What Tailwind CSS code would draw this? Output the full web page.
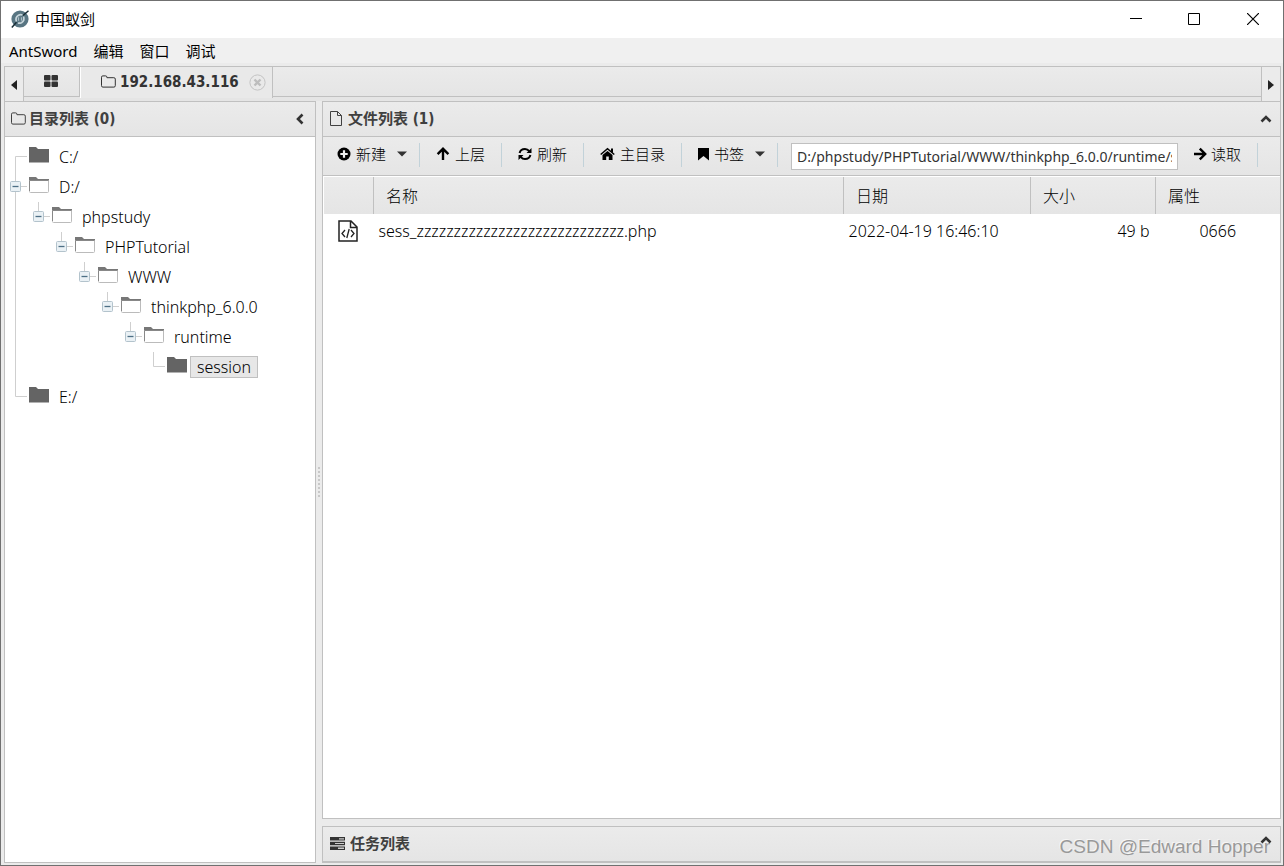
<!DOCTYPE html>
<html lang="zh-CN">
<head>
<meta charset="utf-8">
<title>中国蚁剑</title>
<script src="https://cdn.jsdelivr.net/npm/@tailwindcss/browser@4"></script>
</head>
<body class="flex h-screen flex-col overflow-hidden border border-[#707070] bg-[#ebebeb] font-['Noto_Sans','Noto_Sans_CJK_SC',sans-serif] text-[15px] leading-5 text-black">

<svg class="hidden">
  <symbol id="folder-o" viewBox="0 0 15 13"><path d="M.5 2.2Q.5.9 1.800.9H4.600Q5.900.9 5.900 2.200V2.700H12.800Q14.300 2.700 14.300 4.100V10.700Q14.300 12.100 12.900 12.100H1.900Q.5 12.100.5 10.700Z" fill="none" stroke="currentColor"/></symbol>
  <symbol id="tree-open" viewBox="0 0 20 16"><path d="M0 0H7L9 2H20V4H0Z" fill="#777"/><path d="M.5 3V14.500Q.5 15.500 1.500 15.500H18.500Q19.500 15.500 19.500 14.500V3" fill="#fff" stroke="#bbb"/><path d="M1 4H19V14H1Z" fill="#fff"/><path d="M.5 14V3.500H19.500" fill="none" stroke="#888"/></symbol>
  <symbol id="tree-closed" viewBox="0 0 20 16"><path d="M0 0H7L9 2H20V15.500H0Z" fill="#646464"/></symbol>
  <symbol id="minus" viewBox="0 0 18 30"><path d="M5.500 0V10M11 14.500H17" stroke="#cfcfcf"/><rect x=".5" y="9.500" width="10" height="10" rx="1" fill="#eaf1f5" stroke="#b3c3cc"/><path d="M2.500 14.500H8.500" stroke="#4d6f85" stroke-width="1.300"/></symbol>
  <symbol id="chevron" viewBox="0 0 12 8"><path d="M1.500 6.500L6 2L10.500 6.500" fill="none" stroke="currentColor" stroke-width="2.600"/></symbol>
  <symbol id="caret" viewBox="0 0 10 6"><path d="M0 .5H10L5 5.500Z" fill="#333"/></symbol>
  <symbol id="arrow" viewBox="0 0 14 14"><path d="M1 7H12M6.800 1.600L12.200 7L6.800 12.400" fill="none" stroke="#000" stroke-width="2.400"/></symbol>
</svg>

<header class="flex h-[37px] shrink-0 items-center bg-white pb-0.5 pl-2.5">
  <svg class="mr-1.5 size-[18px] shrink-0" viewBox="0 0 18 18"><circle cx="9" cy="9" r="8.600" fill="#587582"/><path d="M5.500 11.500Q3.800 7.500 7.500 5.200Q9.500 4.200 11.500 5M12.500 6.500Q14 10.500 10.500 12.700Q8.500 13.500 7 13" fill="none" stroke="#c8d6dc" stroke-width="1.700"/><circle cx="9" cy="9" r="2.300" fill="#a9bdc6"/><path d="M9 7V11" stroke="#37515d" stroke-width="1.200"/><path d="M.8 17.500L5.500 12.300M12 5.500L17.500.8" stroke="#172b34" stroke-width="1.500"/></svg>
  <h1 class="grow">中国蚁剑</h1>
  <button aria-label="最小化" class="flex h-full w-[58px] items-center justify-center"><svg class="size-3" viewBox="0 0 12 12"><path d="M0 5.500H12" stroke="#000"/></svg></button>
  <button aria-label="最大化" class="flex h-full w-[58px] items-center justify-center"><svg class="size-3" viewBox="0 0 12 12"><path d="M.5.5H11.500V11.500H.5Z" fill="none" stroke="#000"/></svg></button>
  <button aria-label="关闭" class="flex h-full w-[60px] items-center justify-center"><svg class="size-3" viewBox="0 0 12 12"><path d="M0 0L12 12M12 0L0 12" stroke="#000" stroke-width="1.200"/></svg></button>
</header>

<nav class="flex h-[25px] shrink-0 items-center gap-4 bg-[#f0f0f0] pl-2">
  <button>AntSword</button><button>编辑</button><button>窗口</button><button>调试</button>
</nav>

<main class="mt-[3px] mr-[2px] mb-[2px] ml-[3px] flex min-h-0 grow flex-col">
  <div class="flex h-[35px] shrink-0 border border-b-0 border-[#c0c0c0] bg-[#e5e5e5]">
    <button aria-label="向左滚动" class="flex w-[19px] shrink-0 items-center justify-center border-r border-[#c0c0c0] bg-[#ebebeb] pt-0.5"><svg class="h-2.5 w-1.5" viewBox="0 0 6 10"><path d="M6 0V10L0 5Z" fill="#222"/></svg></button>
    <div role="tablist" class="flex h-[30px] grow border-b border-[#c0c0c0] bg-linear-to-b from-[#ebebeb] to-[#e5e5e5]">
      <button role="tab" aria-label="主页" class="flex w-[56px] items-center justify-center border-r border-[#c0c0c0] pr-0.5 pb-px"><svg class="h-3 w-3.5" viewBox="0 0 14 12" fill="#333"><rect width="6.500" height="5.400" rx="1"/><rect x="7.500" width="6.500" height="5.400" rx="1"/><rect y="6.500" width="6.500" height="5.400" rx="1"/><rect x="7.500" y="6.500" width="6.500" height="5.400" rx="1"/></svg></button>
      <div class="flex h-[31px] shrink-0 items-center border-r border-l border-r-[#c0c0c0] border-l-white bg-[#e9e9e9] pr-1.5 pl-5 text-[#333]">
        <button role="tab" aria-selected="true" class="flex items-center gap-1 pb-0.5 font-['DejaVu_Sans_Condensed','Noto_Sans',sans-serif] font-bold"><svg class="h-[13px] w-[15px]"><use href="#folder-o"/></svg>192.168.43.116</button>
        <button aria-label="关闭标签" class="ml-2.5"><svg class="size-[17px]" viewBox="0 0 17 17"><circle cx="8.500" cy="8.500" r="7.600" fill="none" stroke="#c3c3c3"/><path d="M5.500 5.500L11.500 11.500M11.500 5.500L5.500 11.500" stroke="#bdbdbd" stroke-width="2.400"/></svg></button>
      </div>
    </div>
    <button aria-label="向右滚动" class="flex w-[19px] shrink-0 items-center justify-center border-l border-[#c0c0c0] bg-[#ebebeb] pt-0.5"><svg class="h-2.5 w-1.5" viewBox="0 0 6 10"><path d="M0 0V10L6 5Z" fill="#222"/></svg></button>
  </div>

  <div class="flex min-h-0 grow">
    <aside class="flex w-[312px] shrink-0 flex-col border border-[#c0c0c0] bg-white">
      <div class="flex h-[35px] shrink-0 items-center gap-[3px] border-b border-[#c0c0c0] bg-linear-to-b from-[#ebebeb] to-[#e5e5e5] pr-[9px] pb-px pl-1.5 text-[#404040]">
        <svg class="h-[13px] w-[15px]"><use href="#folder-o"/></svg>
        <h2 class="grow font-['DejaVu_Sans_Condensed','Noto_Sans_CJK_SC',sans-serif] font-bold">目录列表 (0)</h2>
        <button aria-label="折叠目录列表" class="text-[#333]"><svg class="h-2 w-3 -rotate-90"><use href="#chevron"/></svg></button>
      </div>
      <ul role="tree" aria-label="目录列表" class="pt-[5px] pl-[5px] text-base leading-5 font-light">
        <li role="treeitem" class="flex h-[30px] items-center"><svg class="h-[30px] w-[18px]" viewBox="0 0 18 30"><path d="M5.500 30V14.500H17" fill="none" stroke="#cfcfcf"/></svg><svg class="mb-1 ml-px h-4 w-5"><use href="#tree-closed"/></svg><span class="ml-[3px] border border-transparent px-1.5">C:/</span></li>
        <li role="treeitem" aria-expanded="true">
          <div class="flex h-[30px] items-center"><svg class="h-[30px] w-[18px]" viewBox="0 0 18 30"><path d="M5.500 20V30" stroke="#cfcfcf"/><use href="#minus"/></svg><svg class="mb-1 ml-px h-4 w-5"><use href="#tree-open"/></svg><span class="ml-[3px] border border-transparent px-1.5">D:/</span></div>
          <ul role="group" class="ml-[5px] border-l border-[#cfcfcf] pl-[17px]">
            <li role="treeitem" aria-expanded="true">
              <div class="flex h-[30px] items-center"><svg class="h-[30px] w-[18px]"><use href="#minus"/></svg><svg class="mb-1 ml-px h-4 w-5"><use href="#tree-open"/></svg><span class="ml-[3px] border border-transparent px-1.5">phpstudy</span></div>
              <ul role="group" class="pl-[23px]">
                <li role="treeitem" aria-expanded="true">
                  <div class="flex h-[30px] items-center"><svg class="h-[30px] w-[18px]"><use href="#minus"/></svg><svg class="mb-1 ml-px h-4 w-5"><use href="#tree-open"/></svg><span class="ml-[3px] border border-transparent px-1.5">PHPTutorial</span></div>
                  <ul role="group" class="pl-[23px]">
                    <li role="treeitem" aria-expanded="true">
                      <div class="flex h-[30px] items-center"><svg class="h-[30px] w-[18px]"><use href="#minus"/></svg><svg class="mb-1 ml-px h-4 w-5"><use href="#tree-open"/></svg><span class="ml-[3px] border border-transparent px-1.5">WWW</span></div>
                      <ul role="group" class="pl-[23px]">
                        <li role="treeitem" aria-expanded="true">
                          <div class="flex h-[30px] items-center"><svg class="h-[30px] w-[18px]"><use href="#minus"/></svg><svg class="mb-1 ml-px h-4 w-5"><use href="#tree-open"/></svg><span class="ml-[3px] border border-transparent px-1.5">thinkphp_6.0.0</span></div>
                          <ul role="group" class="pl-[23px]">
                            <li role="treeitem" aria-expanded="true">
                              <div class="flex h-[30px] items-center"><svg class="h-[30px] w-[18px]"><use href="#minus"/></svg><svg class="mb-1 ml-px h-4 w-5"><use href="#tree-open"/></svg><span class="ml-[3px] border border-transparent px-1.5">runtime</span></div>
                              <ul role="group" class="pl-[23px]">
                                <li role="treeitem" aria-selected="true" class="flex h-[30px] items-center"><svg class="h-[30px] w-[18px]" viewBox="0 0 18 30"><path d="M5.500 0V14.500H17" fill="none" stroke="#cfcfcf"/></svg><svg class="mb-1 ml-px h-4 w-5"><use href="#tree-closed"/></svg><span class="ml-[3px] border border-[#c0c0c0] bg-[#e7e7e7] px-1.5">session</span></li>
                              </ul>
                            </li>
                          </ul>
                        </li>
                      </ul>
                    </li>
                  </ul>
                </li>
              </ul>
            </li>
          </ul>
        </li>
        <li role="treeitem" class="flex h-[30px] items-center"><svg class="h-[30px] w-[18px]" viewBox="0 0 18 30"><path d="M5.500 0V14.500H17" fill="none" stroke="#cfcfcf"/></svg><svg class="mb-1 ml-px h-4 w-5"><use href="#tree-closed"/></svg><span class="ml-[3px] border border-transparent px-1.5">E:/</span></li>
      </ul>
    </aside>

    <div role="separator" class="flex w-1.5 shrink-0 items-center justify-center"><div class="h-[30px] border-l-2 border-dotted border-[#c8c8c8]"></div></div>

    <div class="flex min-w-0 grow flex-col gap-[7px]">
      <section class="flex min-h-0 grow flex-col border border-[#c0c0c0] bg-white">
        <div class="flex h-[35px] shrink-0 items-center gap-1.5 border-b border-[#c0c0c0] bg-linear-to-b from-[#ebebeb] to-[#e5e5e5] pr-2 pb-px pl-[7px] text-[#404040]">
          <svg class="h-[15px] w-3" viewBox="0 0 12 15"><path d="M.5.5H7.500L11.500 4.500V14.500H.5ZM7.500.5V4.500H11.500" fill="none" stroke="currentColor"/></svg>
          <h2 class="grow font-['DejaVu_Sans_Condensed','Noto_Sans_CJK_SC',sans-serif] font-bold">文件列表 (1)</h2>
          <button aria-label="折叠文件列表" class="text-[#333]"><svg class="h-2 w-3"><use href="#chevron"/></svg></button>
        </div>
        <div role="toolbar" class="flex h-[39px] shrink-0 items-center border-b border-[#c0c0c0] bg-linear-to-b from-[#ebebeb] to-[#e5e5e5] pb-px font-light">
          <button class="mb-0.5 flex h-6 items-center gap-[5px] border-r border-[#c2d2d9] pr-3 pb-0.5 pl-3.5"><svg class="size-3.5" viewBox="0 0 14 14"><circle cx="7" cy="7" r="6.500"/><path d="M7 3.300V10.700M3.300 7H10.700" stroke="#eee" stroke-width="2.200"/></svg>新建<svg class="ml-1.5 h-1.5 w-2.5"><use href="#caret"/></svg></button>
          <button class="mb-0.5 flex h-6 items-center gap-[5px] border-r border-[#c2d2d9] px-4 pb-0.5"><svg class="size-3.5 -rotate-90"><use href="#arrow"/></svg>上层</button>
          <button class="mb-0.5 flex h-6 items-center gap-[5px] border-r border-[#c2d2d9] px-4 pb-0.5"><svg class="size-3.5" viewBox="0 0 14 14"><path d="M1.600 6Q2.500 2 7 2Q9.500 2 11.300 4.200M12.400 8Q11.500 12 7 12Q4.500 12 2.700 9.800" fill="none" stroke="#000" stroke-width="2"/><path d="M13.500 1V6H8.500ZM.5 13V8H5.500Z"/></svg>刷新</button>
          <button class="mb-0.5 flex h-6 items-center gap-[5px] border-r border-[#c2d2d9] px-4 pb-0.5"><svg class="h-3.5 w-[15px]" viewBox="0 0 15 14"><path d="M.7 7.500L7.500 1.800L14.300 7.500" fill="none" stroke="#000" stroke-width="1.500"/><path d="M11 1.500H13V6L11 4.500ZM2.500 8L7.500 3.900L12.500 8V13H8.800V9.500H6.200V13H2.500Z"/></svg>主目录</button>
          <button class="mb-0.5 flex h-6 items-center gap-[5px] border-r border-[#c2d2d9] pr-3 pb-0.5 pl-4"><svg class="h-3.5 w-[11px]" viewBox="0 0 11 14"><path d="M0 1H11V13.500L5.500 9L0 13.500Z"/></svg>书签<svg class="ml-1.5 h-1.5 w-2.5"><use href="#caret"/></svg></button>
          <input aria-label="路径" value="D:/phpstudy/PHPTutorial/WWW/thinkphp_6.0.0/runtime/session/" class="mt-0.5 ml-[13px] h-[27px] w-[387px] border border-[#c0c0c0] bg-white px-[5px] text-sm font-normal text-[#333]">
          <button class="mb-0.5 flex h-6 items-center gap-1 border-r border-[#c2d2d9] pr-4 pb-0.5 pl-[15px]"><svg class="size-3.5"><use href="#arrow"/></svg>读取</button>
        </div>
        <table class="mt-px w-full table-fixed border-l border-white text-left">
          <colgroup><col class="w-[50px]"><col class="w-[470px]"><col class="w-[187px]"><col class="w-[125px]"><col></colgroup>
          <thead class="bg-linear-to-b from-[#ebebeb] to-[#e5e5e5] text-base">
            <tr class="h-[37px]">
              <th aria-label="类型" class="border-r border-[#c0c0c0]"></th>
              <th class="border-r border-[#c0c0c0] px-3 font-light">名称</th>
              <th class="border-r border-[#c0c0c0] px-3 font-light">日期</th>
              <th class="border-r border-[#c0c0c0] px-3 font-light">大小</th>
              <th class="px-3 font-light">属性</th>
            </tr>
          </thead>
          <tbody class="text-base leading-5 font-light">
            <tr class="h-[34px]">
              <td class="pr-0.5"><svg class="mx-auto h-[22px] w-5" viewBox="0 0 20 22"><path d="M1 1H13L19 7V21H1ZM12.500 1V7.500H19" fill="none" stroke="#222" stroke-width="1.500"/><path d="M7 10L4 13.500L7 17M13 10L16 13.500L13 17M11.200 9L8.800 18" fill="none" stroke="#222" stroke-width="1.300"/></svg></td>
              <td class="px-[5px]">sess_zzzzzzzzzzzzzzzzzzzzzzzzzzzz.php</td>
              <td class="px-[5px]">2022-04-19 16:46:10</td>
              <td class="px-1.5 text-right">49 b</td>
              <td class="text-center">0666</td>
            </tr>
          </tbody>
        </table>
      </section>

      <section class="relative flex h-[37px] shrink-0 items-center gap-[5px] border border-b-2 border-[#c0c0c0] bg-linear-to-b from-[#ebebeb] to-[#e5e5e5] pr-2 pb-0.5 pl-[7px] text-[#404040]">
        <svg class="h-[13px] w-[15px]" viewBox="0 0 15 13"><path d="M0 0H15V3.500H0ZM0 4.700H15V8.200H0ZM0 9.400H15V13H0Z" fill="#333"/><path d="M9 1.200H14V2.500H9ZM5 5.900H14V7.100H5ZM8 10.600H14V11.900H8Z" fill="#ccc"/></svg>
        <h2 class="grow font-bold">任务列表</h2>
        <p class="absolute right-2.5 bottom-1 font-['Liberation_Sans',sans-serif] text-[19px] text-[#999] [text-shadow:-1px_-1px_0_#f6f6f6]">CSDN @Edward Hopper</p>
        <button aria-label="展开任务列表" class="relative mb-1.5 text-[#333]"><svg class="h-2 w-3"><use href="#chevron"/></svg></button>
      </section>
    </div>
  </div>
</main>
</body>
</html>
